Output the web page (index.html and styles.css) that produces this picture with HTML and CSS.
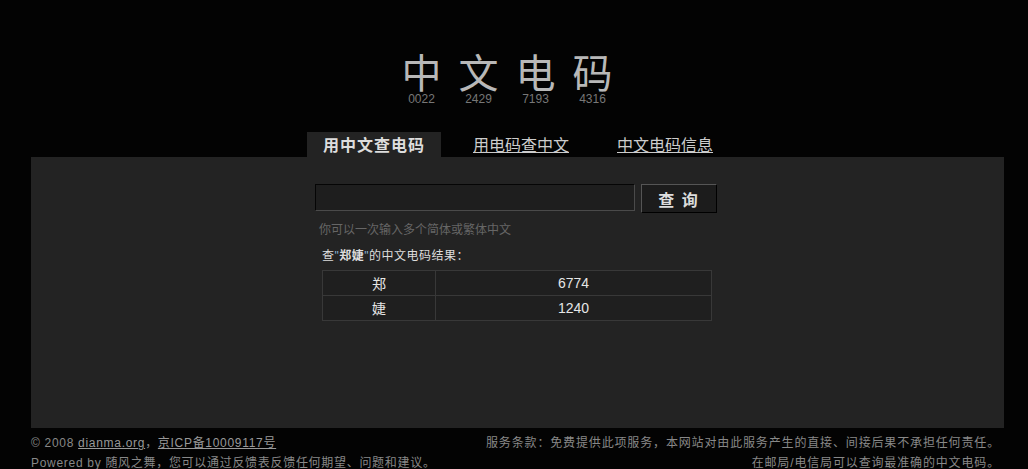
FILE: index.html
```html
<!DOCTYPE html>
<html>
<head>
    <title>中文电码</title>
    <meta http-equiv="Content-Type" content="text/html; charset=utf-8" />
    <link rel="stylesheet" href="styles.css">
</head>
<body>
    <div class="header">
        <div class="logo">
            <div class="logo-char"><span class="zi">中</span><span class="code">0022</span></div>
            <div class="logo-char"><span class="zi">文</span><span class="code">2429</span></div>
            <div class="logo-char"><span class="zi">电</span><span class="code">7193</span></div>
            <div class="logo-char"><span class="zi">码</span><span class="code">4316</span></div>
        </div>
    </div>

    <div class="tabs">
        <a class="tab active">用中文查电码</a>
        <a class="tab" href="#">用电码查中文</a>
        <a class="tab" href="#">中文电码信息</a>
    </div>

    <div class="panel">
        <div class="search-box">
            <form class="search-form" action="#">
                <input type="text" class="search-input" name="q">
                <button type="submit" class="btn-search">查 询</button>
            </form>
            <p class="hint">你可以一次输入多个简体或繁体中文</p>
            <p class="result-title">查<span class="q">"</span><b>郑婕</b><span class="q">"</span>的中文电码结果：</p>
            <table class="result">
                <tr><td class="zi-cell">郑</td><td>6774</td></tr>
                <tr><td class="zi-cell">婕</td><td>1240</td></tr>
            </table>
        </div>
    </div>

    <div class="footer">
        <div class="footer-left">
            <p>&copy; 2008 <a href="#">dianma.org</a>，<a href="#">京ICP备10009117号</a></p>
            <p>Powered by 随风之舞，您可以通过反馈表反馈任何期望、问题和建议。</p>
        </div>
        <div class="footer-right">
            <p>服务条款：免费提供此项服务，本网站对由此服务产生的直接、间接后果不承担任何责任。</p>
            <p>在邮局/电信局可以查询最准确的中文电码。</p>
        </div>
    </div>
</body>
</html>
```

FILE: styles.css
```css
body {
    margin: 0;
    background-color: #030303;
    color: #ccc;
    font-family: "Liberation Sans", "Noto Sans CJK SC", sans-serif;
    font-size: 12px;
}
.header {
    height: 132px;
    display: flex;
    justify-content: center;
    padding-right: 14px;
    box-sizing: border-box;
}
.logo {
    display: flex;
    padding-top: 51px;
}
.logo-char {
    width: 57px;
    display: flex;
    flex-direction: column;
    align-items: center;
}
.zi {
    font-family: "Noto Sans CJK SC", sans-serif;
    font-size: 40px;
    line-height: 40px;
    color: #b8b8b8;
}
.code {
    font-size: 12px;
    line-height: 14px;
    margin-top: 1px;
    color: #777;
}
.tabs {
    display: flex;
    justify-content: center;
    gap: 16px;
    padding-left: 8px;
    height: 25px;
}
.tab {
    padding: 0 16px;
    line-height: 25px;
    font-family: "Noto Sans CJK SC", sans-serif;
    font-size: 16px;
    color: #ccc;
    text-decoration: underline;
}
.tab.active {
    background-color: #232323;
    color: #ddd;
    font-weight: bold;
    text-decoration: none;
    letter-spacing: 1px;
}
.panel {
    margin-left: 31px;
    width: 973px;
    height: 271px;
    background-color: #232323;
    padding-top: 27px;
    box-sizing: border-box;
}
.search-box {
    width: 402px;
    margin: 0 auto;
    padding-right: 3px;
}
.search-form {
    display: flex;
    gap: 6px;
    margin: 0;
}
.search-input {
    width: 320px;
    height: 27px;
    box-sizing: border-box;
    background-color: #1e1e1e;
    border: 1px solid;
    border-color: #050505 #4a4a4a #4a4a4a #050505;
    color: #ddd;
    font-size: 14px;
    padding: 2px 4px;
}
.btn-search {
    width: 76px;
    height: 29px;
    background-color: #1c1c1c;
    border: 1px solid;
    border-color: #555 #000 #000 #555;
    color: #ddd;
    font-family: "Noto Sans CJK SC", sans-serif;
    font-size: 16px;
    font-weight: bold;
    letter-spacing: 2px;
    padding: 0;
}
.hint {
    margin: 7px 0 0 4px;
    line-height: 18px;
    color: #666;
    font-family: "Noto Sans CJK SC", sans-serif;
}
.result-title {
    margin: 8px 0 0 7px;
    line-height: 18px;
    color: #ddd;
    font-family: "Noto Sans CJK SC", sans-serif;
    letter-spacing: 0.5px;
}
.result-title .q {
    color: #8ab4d8;
    font-family: "Liberation Sans", sans-serif;
    font-size: 12px;
}
.result {
    margin: 5px 0 0 7px;
    width: 390px;
    border-collapse: collapse;
    background-color: #1f1f1f;
}
.result td {
    border: 1px solid #383838;
    height: 24px;
    padding: 0;
    text-align: center;
    font-size: 14px;
    color: #e6e6e6;
}
.result td.zi-cell {
    width: 112px;
    font-family: "Noto Sans CJK SC", sans-serif;
}
.footer {
    display: flex;
    justify-content: space-between;
    margin-left: 31px;
    width: 973px;
    padding-top: 5px;
    color: #888;
    font-family: "Liberation Sans", "Noto Sans CJK SC", sans-serif;
}
.footer p {
    margin: 0;
    line-height: 20px;
}
.footer a {
    color: #999;
    text-decoration: underline;
}
.footer-left {
    letter-spacing: 0.7px;
}
.footer-right {
    text-align: right;
    padding-right: 4px;
    letter-spacing: 0.85px;
}
```
